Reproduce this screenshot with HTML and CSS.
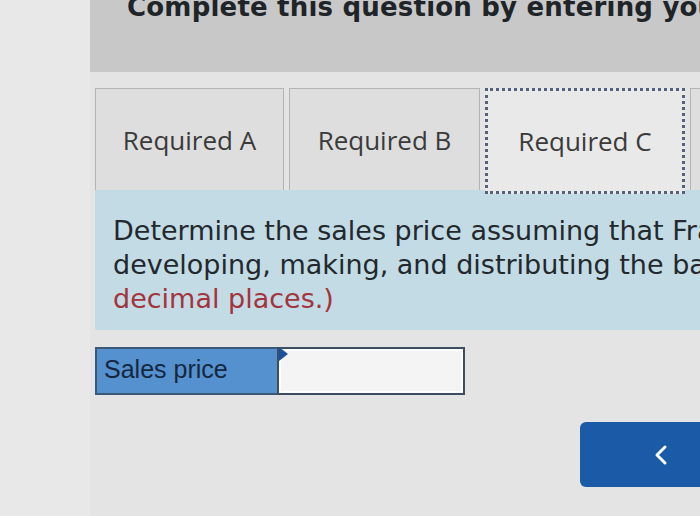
FILE: index.html
```html
<!DOCTYPE html>
<html>
<head>
<meta charset="utf-8">
<link rel="stylesheet" href="styles.css">
</head>
<body>
<div class="screen">
  <div class="gutter"></div>
  <div class="main">
    <div class="header"><span class="header-text">Complete this question by entering your answers in the tabs below.</span></div>
    <div class="tabs">
      <div class="tab">Required A</div>
      <div class="tab">Required B</div>
      <div class="tab active">Required C</div>
      <div class="tab last">Required D</div>
    </div>
    <div class="panel">
      <div class="line">Determine the sales price assuming that Franklin desires to earn a profit</div>
      <div class="line">developing, making, and distributing the batteries. <span class="red">(Round your answer to 2</span></div>
      <div class="line red">decimal places.)</div>
    </div>
    <div class="answer">
      <div class="label">Sales price</div>
      <div class="input"><span class="marker"></span></div>
    </div>
    <div class="nav">
      <div class="btn"><svg width="16" height="22" viewBox="0 0 16 22"><path d="M12 3 L4 11 L12 19" fill="none" stroke="#fff" stroke-width="3" stroke-linecap="round" stroke-linejoin="round"/></svg></div>
    </div>
  </div>
</div>
</body>
</html>
```
FILE: styles.css
```css
html, body {
  margin: 0;
  padding: 0;
  background: #e4e4e4;
}
.screen {
  width: 700px;
  height: 516px;
  display: flex;
  overflow: hidden;
  font-family: "DejaVu Sans", Verdana, sans-serif;
}
.gutter {
  width: 90px;
  flex: none;
  background: #e8e8e8;
}
.main {
  width: 610px;
  flex: none;
  overflow: hidden;
}
.header {
  height: 72px;
  background: #c8c8c8;
  overflow: hidden;
  padding-left: 37px;
  white-space: nowrap;
}
.header-text {
  display: block;
  font-weight: bold;
  font-size: 26px;
  line-height: 26px;
  margin-top: -6px;
  color: #1e2428;
  letter-spacing: 0.2px;
}
.tabs {
  display: flex;
  gap: 5px;
  margin-top: 16px;
  padding-left: 5px;
  height: 102px;
}
.tab {
  flex: none;
  width: 189px;
  box-sizing: border-box;
  border: 1px solid #b3b3b3;
  border-bottom: none;
  background: #dedede;
  display: flex;
  align-items: center;
  justify-content: center;
  font-family: "Open Sans", "DejaVu Sans Condensed", sans-serif;
  font-size: 26px;
  color: #3a3a3a;
  white-space: nowrap;
  overflow: hidden;
}
.tab:nth-child(2) {
  width: 191px;
}
.tab.active {
  width: 200px;
  background: #e9e9e9;
  border: 3px dotted #55607a;
  height: 106px;
}
.tab.last {
  width: 60px;
  justify-content: flex-start;
  padding-left: 30px;
  color: transparent;
}
.panel {
  margin-left: 5px;
  height: 140px;
  box-sizing: border-box;
  background: #c3dbe4;
  padding: 24px 0 0 18px;
  white-space: nowrap;
  overflow: hidden;
  font-size: 27px;
  line-height: 34px;
  color: #22282c;
}
.red {
  color: #a3333d;
}
.answer {
  display: flex;
  margin: 17px 0 0 5px;
  height: 48px;
}
.label {
  width: 182px;
  box-sizing: border-box;
  background: #5590cf;
  border: 2px solid #3a5878;
  border-right: none;
  font-family: "Liberation Sans", Arial, sans-serif;
  font-size: 25px;
  color: #15273e;
  padding: 6px 0 0 7px;
}
.input {
  position: relative;
  width: 188px;
  box-sizing: border-box;
  background: #f4f4f4;
  border: 2px solid #3d4e63;
  box-shadow: inset 0 0 0 2px #ffffff;
}
.marker {
  position: absolute;
  left: 0;
  width: 0;
  height: 0;
  border-top: 7px solid transparent;
  border-bottom: 7px solid transparent;
  border-left: 9px solid #1e4f9a;
  top: -2px;
}
.nav {
  display: flex;
  justify-content: flex-end;
  margin-top: 27px;
}
.btn {
  width: 140px;
  height: 65px;
  margin-right: -20px;
  background: #1a5aa6;
  border-radius: 6px;
  display: flex;
  align-items: center;
  padding-left: 73px;
  box-sizing: border-box;
}
```
